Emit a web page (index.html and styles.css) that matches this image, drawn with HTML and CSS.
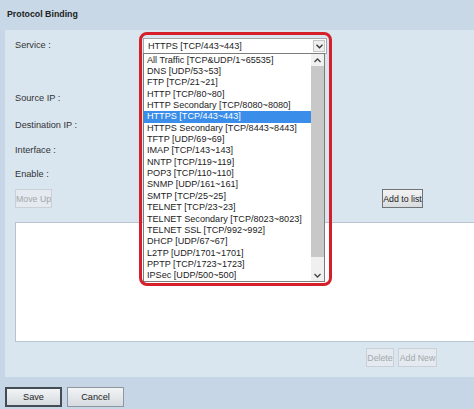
FILE: index.html
```html
<!DOCTYPE html>
<html>
<head>
<meta charset="utf-8">
<link rel="stylesheet" href="styles.css">
</head>
<body>
<div class="header">Protocol Binding</div>
<div class="panel">
  <div class="form">
    <div class="label">Service :</div>
    <div class="field">
      <div class="select-wrap">
        <div class="select">
          <span class="select-text">HTTPS [TCP/443~443]</span>
          <span class="select-arrow"><svg width="7" height="5" viewBox="0 0 7 5"><polyline points="0.5,0.8 3.5,3.8 6.5,0.8" fill="none" stroke="#333" stroke-width="1.3"/></svg></span>
        </div>
        <div class="list">
          <div class="items">
            <div class="item">All Traffic [TCP&amp;UDP/1~65535]</div>
            <div class="item">DNS [UDP/53~53]</div>
            <div class="item">FTP [TCP/21~21]</div>
            <div class="item">HTTP [TCP/80~80]</div>
            <div class="item">HTTP Secondary [TCP/8080~8080]</div>
            <div class="item selected">HTTPS [TCP/443~443]</div>
            <div class="item">HTTPS Secondary [TCP/8443~8443]</div>
            <div class="item">TFTP [UDP/69~69]</div>
            <div class="item">IMAP [TCP/143~143]</div>
            <div class="item">NNTP [TCP/119~119]</div>
            <div class="item">POP3 [TCP/110~110]</div>
            <div class="item">SNMP [UDP/161~161]</div>
            <div class="item">SMTP [TCP/25~25]</div>
            <div class="item">TELNET [TCP/23~23]</div>
            <div class="item">TELNET Secondary [TCP/8023~8023]</div>
            <div class="item">TELNET SSL [TCP/992~992]</div>
            <div class="item">DHCP [UDP/67~67]</div>
            <div class="item">L2TP [UDP/1701~1701]</div>
            <div class="item">PPTP [TCP/1723~1723]</div>
            <div class="item">IPSec [UDP/500~500]</div>
          </div>
          <div class="scrollbar">
            <div class="sb-btn"><svg width="7" height="5" viewBox="0 0 7 5"><polyline points="0.5,4 3.5,1 6.5,4" fill="none" stroke="#444" stroke-width="1.3"/></svg></div>
            <div class="sb-thumb"></div>
            <div class="sb-track"></div>
            <div class="sb-btn"><svg width="7" height="5" viewBox="0 0 7 5"><polyline points="0.5,1 3.5,4 6.5,1" fill="none" stroke="#444" stroke-width="1.3"/></svg></div>
          </div>
        </div>
        <div class="highlight-ring"></div>
      </div>
    </div>
    <div class="label"></div><div class="field"></div>
    <div class="label">Source IP :</div><div class="field"></div>
    <div class="label">Destination IP :</div><div class="field"></div>
    <div class="label">Interface :</div><div class="field"></div>
    <div class="label">Enable :</div><div class="field"></div>
  </div>
  <div class="btn-row">
    <button class="btn disabled w-move">Move Up</button>
    <button class="btn add-list">Add to list</button>
  </div>
  <div class="table"></div>
  <div class="btn-row lower">
    <button class="btn disabled w-del">Delete</button>
    <button class="btn disabled w-new">Add New</button>
  </div>
</div>
<div class="footer">
  <button class="fbtn primary">Save</button>
  <button class="fbtn">Cancel</button>
</div>
</body>
</html>
```

FILE: styles.css
```css
html, body {
  margin: 0;
  padding: 0;
}
body {
  width: 474px;
  height: 409px;
  overflow: hidden;
  background: #c6d6e6;
  font-family: "Liberation Sans", Arial, sans-serif;
  color: #333;
}
.header {
  height: 30px;
  box-sizing: border-box;
  padding: 0 0 3px 7px;
  display: flex;
  align-items: center;
  font-size: 8.8px;
  font-weight: bold;
  color: #222;
  background: #c8d8e7;
}
.panel {
  margin-left: 5px;
  height: 347px;
  box-sizing: border-box;
  padding: 2px 0 0 10px;
  background: #d9e5ef;
}
.form {
  display: grid;
  grid-template-columns: 128px 1fr;
  grid-template-rows: 26px 27px 26px 27px 24px 24px;
}
.label {
  display: flex;
  align-items: center;
  font-size: 9.2px;
  color: #333;
}
.field {
  position: relative;
}
.select-wrap {
  position: relative;
  margin-top: 6px;
  width: 184px;
}
.select {
  height: 16px;
  box-sizing: border-box;
  border: 1px solid #a2a8ae;
  background: #fff;
  display: flex;
  align-items: center;
  justify-content: space-between;
  font-size: 9.1px;
  color: #222;
}
.select-text {
  padding-left: 4px;
}
.select-arrow {
  width: 12px;
  height: 12px;
  margin-right: 1px;
  box-sizing: border-box;
  border: 1px solid #c6c6c6;
  background: #efefef;
  display: flex;
  align-items: center;
  justify-content: center;
}
.list {
  position: absolute;
  top: 15px;
  left: 0;
  width: 182px;
  height: 229px;
  box-sizing: border-box;
  border: 1px solid #7c7c7c;
  background: #fff;
  display: flex;
  z-index: 2;
}
.items {
  flex: 1;
  padding-top: 0.5px;
}
.item {
  height: 11.37px;
  line-height: 11.37px;
  padding-left: 3px;
  font-size: 9.1px;
  color: #222;
  white-space: nowrap;
}
.item.selected {
  background: #3a8de8;
  color: #fff;
}
.scrollbar {
  width: 13px;
  display: flex;
  flex-direction: column;
  background: #f0f0f0;
}
.sb-btn {
  height: 12px;
  display: flex;
  align-items: center;
  justify-content: center;
  background: #f0f0f0;
}
.sb-thumb {
  height: 191px;
  background: #c8c8c8;
}
.sb-track {
  flex: 1;
}
.highlight-ring {
  position: absolute;
  left: -4px;
  top: -6px;
  width: 193px;
  height: 254px;
  box-sizing: border-box;
  border: 3px solid #d5202b;
  border-radius: 8px;
  z-index: 3;
  pointer-events: none;
}
.btn-row {
  display: flex;
  margin-top: 3px;
}
.btn-row.lower {
  margin-top: 6px;
  padding-left: 351px;
  gap: 4px;
}
.btn {
  height: 19px;
  padding: 0;
  margin: 0;
  box-sizing: border-box;
  font-family: "Liberation Sans", Arial, sans-serif;
  font-size: 8.8px;
  color: #222;
  border: 1px solid #6f7479;
  background: linear-gradient(#f3f3f3, #d9dcdf);
  white-space: nowrap;
  overflow: hidden;
}
.btn.disabled {
  color: #a3a8ad;
  border: 1px solid #c9d0d6;
  background: #e4eaef;
}
.w-move { width: 37px; }
.w-del { width: 28px; }
.w-new { width: 39px; }
.btn.add-list {
  width: 41px;
  margin-left: 330px;
}
.table {
  margin-top: 14px;
  height: 120px;
  box-sizing: border-box;
  border: 1px solid #b7c3ce;
  border-right: none;
  background: #fff;
}
.footer {
  padding: 10px 0 0 5px;
  display: flex;
  gap: 5px;
}
.fbtn {
  width: 57px;
  height: 20px;
  margin: 0;
  box-sizing: border-box;
  font-family: "Liberation Sans", Arial, sans-serif;
  font-size: 9.2px;
  color: #222;
  border: 1px solid #8e979f;
  background: linear-gradient(#f2f4f6, #d6dbe0);
}
.fbtn.primary {
  border: 2px solid #434b53;
}
```
